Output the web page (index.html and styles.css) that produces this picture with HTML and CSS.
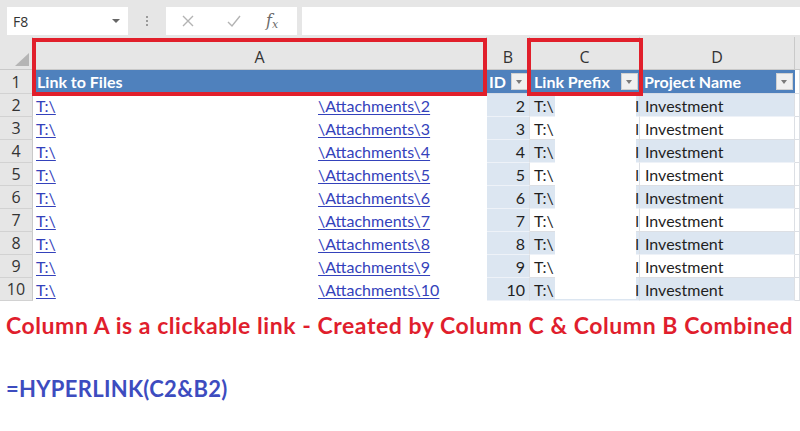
FILE: index.html
```html
<!DOCTYPE html>
<html lang="en">
<head>
<meta charset="utf-8">
<title>Hyperlink column</title>
<link rel="stylesheet" href="styles.css">
</head>
<body>
<div class="sheet">
  <div class="toolbar">
    <div class="namebox"><span class="ref">F8</span><span class="caret"></span></div>
    <div class="dots"><i></i><i></i><i></i></div>
    <div class="fxbox">
      <svg class="ico" width="14" height="14" viewBox="0 0 14 14"><path d="M2 2 L12 12 M12 2 L2 12" stroke="#b3b3b3" stroke-width="1.4" fill="none"/></svg>
      <svg class="ico" width="16" height="14" viewBox="0 0 16 14"><path d="M2 8 L6 12 L14 2" stroke="#b3b3b3" stroke-width="1.4" fill="none"/></svg>
      <span class="fx">f<sub>x</sub></span>
    </div>
    <div class="formula"></div>
  </div>

  <div class="grid">
    <div class="corner"><span class="tri"></span></div>
    <div class="colh">A</div>
    <div class="colh">B</div>
    <div class="colh">C</div>
    <div class="colh">D</div>
    <div class="colh last"></div>

    <div class="rowh">1</div>
    <div class="th">Link to Files</div>
    <div class="th th-id">ID<span class="fbtn"></span></div>
    <div class="th">Link Prefix<span class="fbtn"></span></div>
    <div class="th">Project Name<span class="fbtn"></span></div>
    <div class="cell"></div>

    <div class="rowh">2</div><div class="cell a"><a>T:\</a><a>\Attachments\2</a></div><div class="cell b">2</div><div class="cell c band"><span>T:\</span><span>l</span></div><div class="cell d band">Investment</div><div class="cell"></div>
    <div class="rowh">3</div><div class="cell a"><a>T:\</a><a>\Attachments\3</a></div><div class="cell b">3</div><div class="cell c"><span>T:\</span><span>l</span></div><div class="cell d">Investment</div><div class="cell"></div>
    <div class="rowh">4</div><div class="cell a"><a>T:\</a><a>\Attachments\4</a></div><div class="cell b">4</div><div class="cell c band"><span>T:\</span><span>l</span></div><div class="cell d band">Investment</div><div class="cell"></div>
    <div class="rowh">5</div><div class="cell a"><a>T:\</a><a>\Attachments\5</a></div><div class="cell b">5</div><div class="cell c"><span>T:\</span><span>l</span></div><div class="cell d">Investment</div><div class="cell"></div>
    <div class="rowh">6</div><div class="cell a"><a>T:\</a><a>\Attachments\6</a></div><div class="cell b">6</div><div class="cell c band"><span>T:\</span><span>l</span></div><div class="cell d band">Investment</div><div class="cell"></div>
    <div class="rowh">7</div><div class="cell a"><a>T:\</a><a>\Attachments\7</a></div><div class="cell b">7</div><div class="cell c"><span>T:\</span><span>l</span></div><div class="cell d">Investment</div><div class="cell"></div>
    <div class="rowh">8</div><div class="cell a"><a>T:\</a><a>\Attachments\8</a></div><div class="cell b">8</div><div class="cell c band"><span>T:\</span><span>l</span></div><div class="cell d band">Investment</div><div class="cell"></div>
    <div class="rowh">9</div><div class="cell a"><a>T:\</a><a>\Attachments\9</a></div><div class="cell b">9</div><div class="cell c"><span>T:\</span><span>l</span></div><div class="cell d">Investment</div><div class="cell"></div>
    <div class="rowh">10</div><div class="cell a"><a>T:\</a><a>\Attachments\10</a></div><div class="cell b">10</div><div class="cell c band"><span>T:\</span><span>l</span></div><div class="cell d band">Investment</div><div class="cell"></div>

    <div class="redact redact-c"></div>
    <div class="mark mark-a"></div>
    <div class="mark mark-c"></div>
  </div>
</div>

<div class="notes">
  <p class="note-red">Column A is a clickable link - Created by Column C &amp; Column B Combined</p>
  <p class="note-blue">=HYPERLINK(C2&amp;B2)</p>
</div>
</body>
</html>
```

FILE: styles.css
```css
* { box-sizing: border-box; }
html, body { margin: 0; padding: 0; background: #ffffff; }
body { width: 800px; height: 431px; overflow: hidden; font-family: Lato, "Open Sans", sans-serif; }

.sheet { background: #e6e6e6; }

.toolbar {
  height: 37px;
  display: flex;
  align-items: flex-start;
  padding-top: 7px;
  padding-left: 7px;
}
.namebox {
  width: 121px;
  height: 28px;
  background: #fff;
  display: flex;
  align-items: center;
  justify-content: space-between;
  padding: 0 8px 0 6px;
}
.ref { font-family: "Open Sans", sans-serif; font-size: 14px; color: #333; }
.caret {
  width: 0; height: 0;
  border-left: 4px solid transparent;
  border-right: 4px solid transparent;
  border-top: 4px solid #666;
}
.dots {
  width: 38px;
  height: 28px;
  display: flex;
  flex-direction: column;
  align-items: center;
  justify-content: center;
  gap: 2px;
}
.dots i { display: block; width: 2px; height: 2px; background: #9a9a9a; }
.fxbox {
  width: 131px;
  height: 28px;
  background: #fff;
  display: flex;
  align-items: center;
  padding-left: 15px;
  gap: 0;
}
.fxbox .ico:first-child { margin-right: 31px; }
.fxbox .ico:nth-child(2) { margin-right: 24px; }
.fx {
  font-family: "DejaVu Serif", "Liberation Serif", serif;
  font-style: italic;
  font-size: 16px;
  color: #6a6a6a;
  line-height: 1;
}
.fx sub { font-size: 11px; vertical-align: -2px; }
.formula {
  flex: 1;
  height: 28px;
  margin-left: 5px;
  background: #fff;
}

.grid {
  position: relative;
  display: grid;
  grid-template-columns: 33px 454px 43px 110px 155px 5px;
  grid-template-rows: 33px 24px repeat(9, 23px);
}

.corner {
  background: #e6e6e6;
  border-right: 1px solid #c9c9c9;
  border-bottom: 1px solid #c9c9c9;
  position: relative;
}
.tri {
  position: absolute;
  right: 3px;
  bottom: 3px;
  width: 0; height: 0;
  border-left: 14px solid transparent;
  border-bottom: 13px solid #b5b5b5;
}
.colh {
  background: #e6e6e6;
  border-right: 1px solid #c9c9c9;
  border-bottom: 1px solid #c9c9c9;
  display: flex;
  align-items: flex-end;
  justify-content: center;
  padding-bottom: 1px;
  font-family: "Open Sans", sans-serif;
  font-size: 16px;
  color: #333;
}
.colh.last { border-right: none; }
.rowh {
  background: #e6e6e6;
  border-right: 1px solid #c9c9c9;
  border-bottom: 1px solid #d2d2d2;
  display: flex;
  align-items: center;
  justify-content: center;
  font-family: "Open Sans", sans-serif;
  font-size: 16px;
  color: #333;
}

.th {
  background: #4f81bd;
  color: #fff;
  font-weight: 700;
  font-size: 16px;
  display: flex;
  align-items: center;
  justify-content: space-between;
  padding: 0 2px 0 4px;
  border-bottom: 1px solid #d4dbe6;
}
.th-id { padding: 0 2px 0 2px; }
.fbtn {
  width: 17px;
  height: 17px;
  background: #f0f0f0;
  border: 1px solid #d0d0d0;
  position: relative;
  flex: none;
}
.fbtn::after {
  content: "";
  position: absolute;
  left: 4px;
  top: 6px;
  border-left: 3.5px solid transparent;
  border-right: 3.5px solid transparent;
  border-top: 4px solid #7a7a7a;
}

.cell {
  background: #fff;
  border-bottom: 1px solid #dcdfe4;
  border-right: 1px solid #dcdfe4;
  font-size: 16px;
  color: #1f1f1f;
  display: flex;
  align-items: center;
  white-space: nowrap;
  overflow: hidden;
}
.cell.a {
  display: grid;
  grid-template-columns: 282px 1fr;
  padding-left: 3px;
  border-right: none;
  border-bottom: none;
}
.cell.a a {
  color: #3442bb;
  text-decoration: underline;
  text-underline-offset: 2px;
}
.cell.b {
  background: #dce6f1;
  justify-content: flex-end;
  padding-right: 4px;
  border-bottom: 1px solid #eef2f8;
}
.cell.c {
  justify-content: space-between;
  padding: 0 0 0 4px;
}
.cell.d { padding-left: 5px; }
.band { background: #dce6f1; border-bottom-color: #eef2f8; }

.redact {
  position: absolute;
  background: #fff;
}
.redact-c { left: 555px; top: 59px; width: 81px; height: 203px; }

.mark {
  position: absolute;
  border: 4px solid #e11f2b;
}
.mark-a { left: 32px; top: 1px; width: 455px; height: 58px; }
.mark-c { left: 527px; top: 1px; width: 116px; height: 58px; }

.notes { padding: 0 0 0 6px; }
.note-red {
  margin: 0;
  padding-top: 11px;
  font-size: 23px;
  line-height: 26px;
  font-weight: 700;
  letter-spacing: 0.55px;
  color: #e01e2d;
  white-space: nowrap;
}
.note-blue {
  margin: 38px 0 0 0;
  font-size: 22px;
  line-height: 26px;
  font-weight: 700;
  letter-spacing: 0.3px;
  color: #3d4cbf;
}
```
